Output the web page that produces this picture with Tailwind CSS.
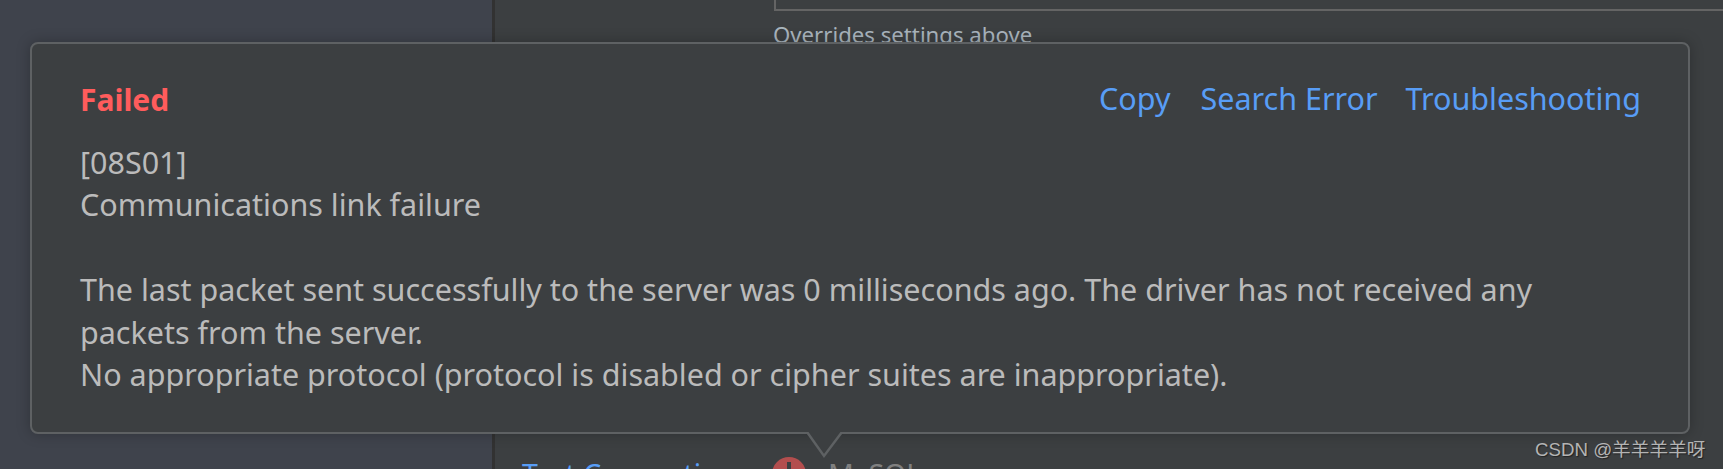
<!DOCTYPE html>
<html lang="en">
<head>
<meta charset="utf-8">
<title>Failed</title>
<script src="https://cdn.jsdelivr.net/npm/@tailwindcss/browser@4"></script>
</head>
<body class="bg-[#3c3f41] overflow-hidden">
<div class="relative flex w-[1723px] h-[469px] overflow-hidden font-['Noto_Sans',sans-serif]">
  <!-- Sidebar -->
  <div class="w-[492px] h-full shrink-0 bg-[#3f434c]"></div>
  <div class="w-[3px] h-full shrink-0 bg-[#323232]"></div>
  <!-- Settings behind the popup -->
  <div class="flex-1 flex flex-col h-full">
    <div class="ml-[279px] h-[11px] border-b-2 border-l-2 border-[#646464]"></div>
    <div class="ml-[278px] mt-[9px] text-[22.2px] leading-[30px] text-[#a9b4bd]">Overrides settings above</div>
    <div class="mt-auto flex items-center gap-[36px] ml-[27px] mb-[-24px] text-[28.5px] leading-[38px]">
      <span class="text-[#589df6]">Test Connection</span>
      <div class="flex items-center gap-[22px]">
        <span class="relative w-[34px] h-[34px] rounded-full bg-[#b34e4e]">
          <span class="absolute left-[15px] top-[5px] w-[4px] h-[14px] bg-[#3c3f41]"></span>
        </span>
        <span class="text-[#808080]">MySQL</span>
      </div>
    </div>
  </div>
  <!-- Popup -->
  <div class="absolute left-[30px] top-[42px] w-[1660px] h-[392px] rounded-[8px] border-2 border-[#5e6163] bg-[#3c3f41] pl-[48px] pr-[47px] pt-[33px] shadow-[0_0_14px_rgba(0,0,0,0.25)]">
    <div class="flex justify-between items-center h-[44px]">
      <span class="text-[30px] font-bold text-[#ff5c5c]">Failed</span>
      <div class="flex text-[30.5px] text-[#589df6]">
        <span class="mr-[30px]">Copy</span>
        <span class="mr-[28px]">Search Error</span>
        <span>Troubleshooting</span>
      </div>
    </div>
    <div class="mt-[20px] text-[30.5px] leading-[42.4px] text-[#bbbbbb]">
      <p>[08S01]</p>
      <p>Communications link failure</p>
      <p class="h-[42.4px]"></p>
      <p>The last packet sent successfully to the server was 0 milliseconds ago. The driver has not received any<br>packets from the server.</p>
      <p>No appropriate protocol (protocol is disabled or cipher suites are inappropriate).</p>
    </div>
    <!-- Arrow -->
    <svg class="absolute left-[774px] top-[388px]" width="38" height="28" viewBox="0 0 38 28" fill="none">
      <path d="M1 0 L18 24 L36 0" fill="#3c3f41" stroke="#5e6163" stroke-width="2.5"/>
    </svg>
  </div>
  <!-- Watermark -->
  <div class="absolute left-[1535px] top-[437px] text-[18.7px] leading-[26px] text-[#b4b4b4] [text-shadow:1px_1px_1px_#222] font-['Liberation_Sans','Noto_Sans_CJK_SC',sans-serif]">CSDN @羊羊羊羊呀</div>
</div>
</body>
</html>
